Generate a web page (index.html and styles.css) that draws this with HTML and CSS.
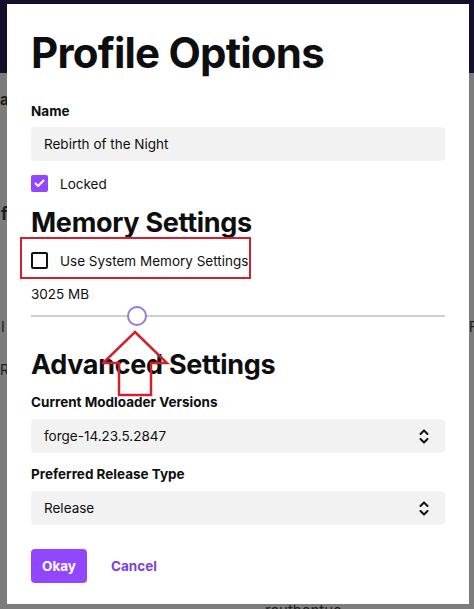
FILE: index.html
```html
<!DOCTYPE html>
<html lang="en">
<head>
    <meta charset="UTF-8">
    <meta name="viewport" content="width=device-width, initial-scale=1.0">
    <title>Profile Options</title>
    <link rel="stylesheet" href="styles.css">
</head>
<body>
    <!-- page behind the dialog -->
    <div class="backdrop">
        <div class="topbar"></div>
        <div class="page">
            <span class="frag frag-a">a</span>
            <span class="frag frag-f">f</span>
            <span class="frag frag-i">I</span>
            <span class="frag frag-r">R</span>
            <span class="frag frag-f2">F</span>
            <span class="frag frag-bottom">rauthentue</span>
        </div>
    </div>

    <!-- dialog -->
    <div class="modal">
        <h1 class="title">Profile Options</h1>

        <label class="field-label name-label" for="nameInput">Name</label>
        <input id="nameInput" class="text-input" type="text" value="Rebirth of the Night">

        <div class="check-row locked-row">
            <span class="checkbox checked">
                <svg width="11" height="9" viewBox="0 0 11 9"><path d="M1.5 4.5 L4.2 7 L9.5 1.5" fill="none" stroke="#fff" stroke-width="2" stroke-linecap="round" stroke-linejoin="round"/></svg>
            </span>
            <span class="check-text">Locked</span>
        </div>

        <h2 class="section memory">Memory Settings</h2>

        <div class="check-row system-row">
            <span class="checkbox"></span>
            <span class="check-text">Use System Memory Settings</span>
            <span class="highlight"></span>
        </div>

        <div class="memory-value">3025 MB</div>
        <div class="slider">
            <div class="track"></div>
            <div class="thumb"></div>
            <!-- annotation arrow -->
            <svg class="arrow" width="68" height="68" viewBox="0 0 68 68">
                <path d="M33 2 L65 33 L49 33 L49 65 L17 65 L17 33 L1 33 Z" fill="none" stroke="#d3202f" stroke-width="2.5" stroke-linejoin="miter"/>
            </svg>
        </div>

        <h2 class="section advanced">Advanced Settings</h2>

        <label class="field-label modloader-label">Current Modloader Versions</label>
        <div class="select modloader-select">
            <span>forge-14.23.5.2847</span>
            <svg width="10" height="15" viewBox="0 0 10 15"><path d="M1.5 5 L5 1.5 L8.5 5 M1.5 10 L5 13.5 L8.5 10" fill="none" stroke="#111" stroke-width="2" stroke-linecap="round" stroke-linejoin="round"/></svg>
        </div>

        <label class="field-label release-label">Preferred Release Type</label>
        <div class="select release-select">
            <span>Release</span>
            <svg width="10" height="15" viewBox="0 0 10 15"><path d="M1.5 5 L5 1.5 L8.5 5 M1.5 10 L5 13.5 L8.5 10" fill="none" stroke="#111" stroke-width="2" stroke-linecap="round" stroke-linejoin="round"/></svg>
        </div>

        <div class="actions">
            <button class="btn-okay">Okay</button>
            <button class="btn-cancel">Cancel</button>
        </div>
    </div>
</body>
</html>
```

FILE: styles.css
```css
body {
    margin: 0;
    padding: 0;
    font-family: Inter, "Noto Sans", sans-serif;
    color: #0e0e10;
    width: 474px;
    height: 609px;
    overflow: hidden;
    position: relative;
}
.backdrop {
    width: 474px;
    height: 609px;
    display: flex;
    flex-direction: column;
}
.topbar {
    height: 73px;
    background-color: #150f2c;
}
.page {
    flex: 1;
    background-color: #7c7c7c;
    position: relative;
    color: #1c1c1c;
}
.frag {
    position: absolute;
}
.frag-a { left: 0; top: 17px; font-size: 15px; font-weight: 700; }
.frag-f { left: 1px; top: 131px; font-size: 17px; font-weight: 700; }
.frag-i { left: 1px; top: 245px; font-size: 14px; }
.frag-r { left: 0; top: 288px; font-size: 14px; }
.frag-f2 { left: 469px; top: 245px; font-size: 14px; }
.frag-bottom { left: 265px; top: 528px; font-size: 15px; }

.modal {
    position: absolute;
    left: 7px;
    top: 4px;
    width: 462px;
    height: 600px;
    background-color: #fff;
    box-sizing: border-box;
    padding: 24px 24px 0 24px;
    display: flex;
    flex-direction: column;
}
.title {
    margin: 0;
    font-size: 42px;
    font-weight: 700;
    letter-spacing: -0.8px;
    line-height: 50px;
}
.field-label {
    display: block;
    font-size: 13.5px;
    font-weight: 700;
    line-height: 18px;
}
.name-label {
    margin-top: 24px;
}
.text-input {
    margin-top: 7px;
    height: 34px;
    box-sizing: border-box;
    border: none;
    border-radius: 4px;
    background-color: #f2f2f2;
    font-family: inherit;
    font-size: 13.5px;
    padding: 0 13px;
    color: #0e0e10;
    outline: none;
}
.check-row {
    display: flex;
    align-items: center;
    gap: 12px;
    height: 17px;
    position: relative;
}
.locked-row {
    margin-top: 14px;
}
.checkbox {
    width: 17px;
    height: 17px;
    box-sizing: border-box;
    border: 2px solid #111;
    border-radius: 2px;
    display: flex;
    align-items: center;
    justify-content: center;
}
.checkbox.checked {
    background-color: #9147ff;
    border-color: #9147ff;
}
.check-text {
    font-size: 13.5px;
}
.section {
    margin: 0;
    font-size: 27px;
    font-weight: 700;
    letter-spacing: -0.3px;
    line-height: 34px;
}
.section.memory {
    margin-top: 14px;
}
.system-row {
    margin-top: 12px;
}
.highlight {
    position: absolute;
    left: -11px;
    top: -15px;
    width: 231px;
    height: 42px;
    border: 2px solid #d3202f;
    box-sizing: border-box;
}
.memory-value {
    margin-top: 16px;
    font-size: 13.5px;
    line-height: 18px;
}
.slider {
    position: relative;
    height: 20px;
    margin-top: 3px;
}
.track {
    position: absolute;
    left: 0;
    right: 0;
    top: 9px;
    height: 2px;
    background-color: #d0d0d0;
}
.thumb {
    position: absolute;
    left: 96px;
    top: 0;
    width: 20px;
    height: 20px;
    box-sizing: border-box;
    border: 2px solid #9a78d8;
    border-radius: 50%;
    background-color: #fff;
}
.arrow {
    position: absolute;
    left: 71px;
    top: 24px;
    z-index: 2;
}
.section.advanced {
    margin-top: 22px;
}
.modloader-label {
    margin-top: 11px;
}
.select {
    height: 34px;
    border-radius: 4px;
    background-color: #f2f2f2;
    display: flex;
    align-items: center;
    justify-content: space-between;
    padding: 0 16px 0 13px;
    font-size: 13.5px;
}
.modloader-select {
    margin-top: 8px;
}
.release-label {
    margin-top: 12px;
}
.release-select {
    margin-top: 8px;
}
.actions {
    display: flex;
    align-items: center;
    gap: 24px;
    margin-top: 24px;
}
.btn-okay {
    height: 34px;
    padding: 0 11px;
    border: none;
    border-radius: 4px;
    background-color: #9147ff;
    color: #fff;
    font-family: inherit;
    font-size: 13.5px;
    font-weight: 700;
}
.btn-cancel {
    border: none;
    background: none;
    padding: 0;
    color: #7b3fe4;
    font-family: inherit;
    font-size: 13.5px;
    font-weight: 700;
}
```
